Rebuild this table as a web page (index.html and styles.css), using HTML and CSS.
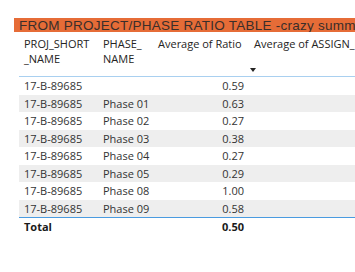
FILE: index.html
```html
<!DOCTYPE html>
<html>
<head>
<meta charset="utf-8">
<link rel="stylesheet" href="styles.css">
</head>
<body>
<div class="visual">
  <div class="title">FROM PROJECT/PHASE RATIO TABLE -crazy summary of ratios</div>
  <table class="grid">
    <colgroup>
      <col class="c1"><col class="c2"><col class="c3"><col class="c4">
    </colgroup>
    <thead>
      <tr>
        <th>PROJ_SHORT<br>_NAME</th>
        <th>PHASE_<br>NAME</th>
        <th class="num-h">Average of Ratio</th>
        <th class="sorted">Average of ASSIGN_HOURS<span class="sort-arrow"></span></th>
      </tr>
    </thead>
    <tbody>
      <tr><td>17-B-89685</td><td></td><td class="num">0.59</td><td></td></tr>
      <tr class="alt"><td>17-B-89685</td><td>Phase 01</td><td class="num">0.63</td><td></td></tr>
      <tr><td>17-B-89685</td><td>Phase 02</td><td class="num">0.27</td><td></td></tr>
      <tr class="alt"><td>17-B-89685</td><td>Phase 03</td><td class="num">0.38</td><td></td></tr>
      <tr><td>17-B-89685</td><td>Phase 04</td><td class="num">0.27</td><td></td></tr>
      <tr class="alt"><td>17-B-89685</td><td>Phase 05</td><td class="num">0.29</td><td></td></tr>
      <tr><td>17-B-89685</td><td>Phase 08</td><td class="num">1.00</td><td></td></tr>
      <tr class="alt"><td>17-B-89685</td><td>Phase 09</td><td class="num">0.58</td><td></td></tr>
    </tbody>
    <tfoot>
      <tr><td>Total</td><td></td><td class="num">0.50</td><td></td></tr>
    </tfoot>
  </table>
</div>
</body>
</html>
```

FILE: styles.css
```css
html, body {
  margin: 0;
  padding: 0;
  background: #ffffff;
  overflow: hidden;
}

.visual {
  margin-left: 14px;
  padding-top: 18px;
  width: 620px;
}

.title {
  background: #e66c37;
  height: 14px;
  padding-left: 5px;
  font-family: "Liberation Sans", Arial, sans-serif;
  font-size: 13.5px;
  letter-spacing: 0.25px;
  line-height: 15px;
  color: #3a2e2a;
  white-space: nowrap;
  overflow: hidden;
}

.grid {
  margin-left: 5px;
  border-collapse: collapse;
  table-layout: fixed;
  width: 600px;
  font-family: "Open Sans", "Liberation Sans", sans-serif;
  font-size: 11px;
  color: #333333;
}

.c1 { width: 79px; }
.c2 { width: 55px; }
.c3 { width: 96px; }
.c4 { width: 370px; }

.grid th {
  font-weight: normal;
  text-align: left;
  vertical-align: top;
  color: #252423;
  line-height: 14.5px;
  padding: 5px 5px 10px 5px;
  border-bottom: 1px solid #a9d0f0;
  white-space: nowrap;
}

.grid th.sorted {
  position: relative;
}

.sort-arrow {
  position: absolute;
  left: 1px;
  bottom: 4px;
  width: 0;
  height: 0;
  border-left: 3px solid transparent;
  border-right: 3px solid transparent;
  border-top: 4px solid #252423;
}

.grid td {
  height: 17.5px;
  padding: 0 5px;
  line-height: 17.5px;
  white-space: nowrap;
  overflow: hidden;
}

.grid tr.alt td {
  background: #eeeeee;
}

.grid td.num {
  text-align: right;
}

.grid tfoot td {
  border-top: 1px solid #4a9be0;
  font-weight: bold;
  color: #1a1a1a;
  height: 18px;
  line-height: 18px;
}
```
